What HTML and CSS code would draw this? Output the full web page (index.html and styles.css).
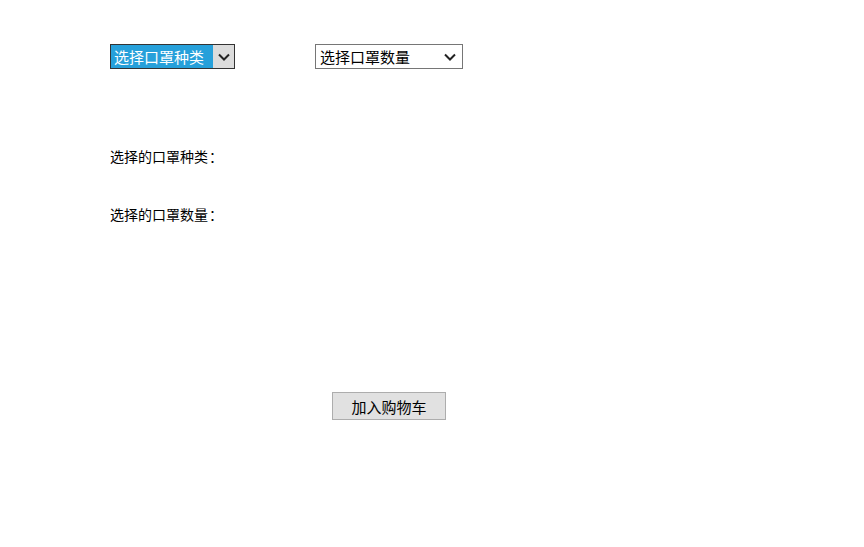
FILE: index.html
```html
<!DOCTYPE html>
<html lang="zh">
<head>
<meta charset="utf-8">
<title>口罩</title>
<link rel="stylesheet" href="styles.css">
</head>
<body>
<div class="page">
  <div class="selects">
    <div class="select select-focused">
      <span class="select-value">选择口罩种类</span>
      <span class="select-arrow"><svg width="12" height="8" viewBox="0 0 12 8"><path d="M1 1.5 L6 6.5 L11 1.5" fill="none" stroke="#222" stroke-width="2"/></svg></span>
    </div>
    <div class="select select-wide">
      <span class="select-value">选择口罩数量</span>
      <span class="select-arrow"><svg width="12" height="8" viewBox="0 0 12 8"><path d="M1 1.5 L6 6.5 L11 1.5" fill="none" stroke="#222" stroke-width="2"/></svg></span>
    </div>
  </div>
  <p class="label label-first">选择的口罩种类<span class="colon">：</span></p>
  <p class="label label-second">选择的口罩数量<span class="colon">：</span></p>
  <button class="btn" type="button">加入购物车</button>
</div>
</body>
</html>
```

FILE: styles.css
```css
html, body {
  margin: 0;
  padding: 0;
  background: #fff;
}
body {
  font-family: "Noto Sans CJK SC", "Noto Sans", sans-serif;
  color: #000;
}
.page {
  padding: 44px 0 0 110px;
}
.selects {
  display: flex;
  gap: 80px;
}
.select {
  box-sizing: border-box;
  height: 25px;
  display: flex;
  align-items: stretch;
  font-size: 15px;
  border: 1px solid #767676;
  background: #fff;
}
.select-focused {
  width: 125px;
  border-color: #333;
}
.select-wide {
  width: 148px;
}
.select-value {
  flex: 1;
  display: flex;
  align-items: center;
  padding-left: 4px;
  line-height: 1;
  white-space: nowrap;
}
.select-focused .select-value {
  background: #26a0da;
  color: #fff;
  padding-left: 3px;
}
.select-arrow {
  width: 21px;
  display: flex;
  align-items: center;
  justify-content: center;
}
.select-focused .select-arrow {
  background: #dcdcdc;
}
.select-wide .select-arrow {
  width: 24px;
}
.label {
  margin: 0;
  font-size: 14px;
  line-height: 20px;
}
.colon {
  font-family: "Noto Sans CJK TC", "Noto Sans CJK SC", sans-serif;
  margin-left: 1px;
}
.label-first {
  margin-top: 77px;
}
.label-second {
  margin-top: 38px;
}
.btn {
  display: block;
  box-sizing: border-box;
  margin: 168px 0 0 222px;
  width: 114px;
  height: 28px;
  padding: 0;
  font-family: inherit;
  font-size: 15px;
  color: #000;
  background: #e1e1e1;
  border: 1px solid #adadad;
  border-radius: 0;
}
```
